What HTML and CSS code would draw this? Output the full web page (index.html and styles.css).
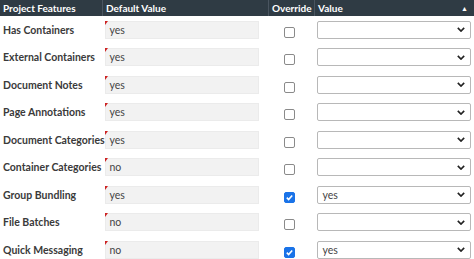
FILE: index.html
```html
<!DOCTYPE html>
<html lang="en">
<head>
    <meta charset="UTF-8">
    <title>Project Features</title>
    <link rel="stylesheet" href="styles.css">
</head>
<body>
    <table class="features">
        <thead>
            <tr>
                <th class="col-name">Project Features</th>
                <th class="col-default">Default Value</th>
                <th class="col-override">Override</th>
                <th class="col-value">Value <span class="sort-arrow">&#9650;</span></th>
            </tr>
        </thead>
        <tbody>
            <tr>
                <td class="name">Has Containers</td>
                <td><div class="default-box">yes</div></td>
                <td class="override"><span class="check"></span></td>
                <td><div class="select"><span></span><svg class="chevron" viewBox="0 0 10 6"><path d="M1 1l4 4 4-4" /></svg></div></td>
            </tr>
            <tr>
                <td class="name">External Containers</td>
                <td><div class="default-box">yes</div></td>
                <td class="override"><span class="check"></span></td>
                <td><div class="select"><span></span><svg class="chevron" viewBox="0 0 10 6"><path d="M1 1l4 4 4-4" /></svg></div></td>
            </tr>
            <tr>
                <td class="name">Document Notes</td>
                <td><div class="default-box">yes</div></td>
                <td class="override"><span class="check"></span></td>
                <td><div class="select"><span></span><svg class="chevron" viewBox="0 0 10 6"><path d="M1 1l4 4 4-4" /></svg></div></td>
            </tr>
            <tr>
                <td class="name">Page Annotations</td>
                <td><div class="default-box">yes</div></td>
                <td class="override"><span class="check"></span></td>
                <td><div class="select"><span></span><svg class="chevron" viewBox="0 0 10 6"><path d="M1 1l4 4 4-4" /></svg></div></td>
            </tr>
            <tr>
                <td class="name">Document Categories</td>
                <td><div class="default-box">yes</div></td>
                <td class="override"><span class="check"></span></td>
                <td><div class="select"><span></span><svg class="chevron" viewBox="0 0 10 6"><path d="M1 1l4 4 4-4" /></svg></div></td>
            </tr>
            <tr>
                <td class="name">Container Categories</td>
                <td><div class="default-box">no</div></td>
                <td class="override"><span class="check"></span></td>
                <td><div class="select"><span></span><svg class="chevron" viewBox="0 0 10 6"><path d="M1 1l4 4 4-4" /></svg></div></td>
            </tr>
            <tr>
                <td class="name">Group Bundling</td>
                <td><div class="default-box">yes</div></td>
                <td class="override"><span class="check checked"><svg viewBox="0 0 10 10"><path d="M2 5.2l2 2 4-4.4" /></svg></span></td>
                <td><div class="select"><span>yes</span><svg class="chevron" viewBox="0 0 10 6"><path d="M1 1l4 4 4-4" /></svg></div></td>
            </tr>
            <tr>
                <td class="name">File Batches</td>
                <td><div class="default-box">no</div></td>
                <td class="override"><span class="check"></span></td>
                <td><div class="select"><span></span><svg class="chevron" viewBox="0 0 10 6"><path d="M1 1l4 4 4-4" /></svg></div></td>
            </tr>
            <tr>
                <td class="name">Quick Messaging</td>
                <td><div class="default-box">no</div></td>
                <td class="override"><span class="check checked"><svg viewBox="0 0 10 10"><path d="M2 5.2l2 2 4-4.4" /></svg></span></td>
                <td><div class="select"><span>yes</span><svg class="chevron" viewBox="0 0 10 6"><path d="M1 1l4 4 4-4" /></svg></div></td>
            </tr>
        </tbody>
    </table>
</body>
</html>
```

FILE: styles.css
```css
body {
    margin: 0;
    background-color: #ffffff;
    font-family: Lato, "Open Sans", sans-serif;
    overflow: hidden;
}

.features {
    width: 474px;
    border-collapse: collapse;
    table-layout: fixed;
}

/* Header row */
.features th {
    height: 16px;
    padding: 0 3px;
    background-color: #2f3b44;
    color: #ffffff;
    font-size: 10px;
    font-weight: bold;
    text-align: left;
    white-space: nowrap;
    border-left: 1px solid #4a5560;
}
.features th:first-child { border-left: none; }
.col-name { width: 96px; }
.col-default { width: 159px; }
.col-override { width: 39px; }
.col-value { position: relative; }
.sort-arrow {
    position: absolute;
    right: 6px;
    top: 4px;
    font-size: 7px;
}

/* Body rows */
.features td {
    height: 27.5px;
    padding: 0;
    vertical-align: middle;
    white-space: nowrap;
}
.name {
    padding-left: 3px !important;
    font-size: 10.5px;
    font-weight: bold;
    color: #3a3a3a;
}

.default-box {
    position: relative;
    width: 154px;
    height: 18px;
    margin-left: 2px;
    background-color: #f2f2f2;
    border: 1px solid #ebebeb;
    box-sizing: border-box;
    font-size: 10.5px;
    color: #444;
    line-height: 16px;
    padding-left: 4px;
}
.default-box::before {
    content: "";
    position: absolute;
    left: -1px;
    top: -1px;
    border-top: 4px solid #cc2222;
    border-right: 3px solid transparent;
}

.features td.override {
    text-align: center;
    padding-right: 5px;
}
.check {
    display: inline-block;
    width: 11px;
    height: 11px;
    border: 1px solid #8a8a8a;
    border-radius: 2px;
    box-sizing: border-box;
    vertical-align: middle;
}
.check.checked {
    background-color: #1a73e8;
    border-color: #1a73e8;
}
.check svg {
    display: block;
    width: 9px;
    height: 9px;
    fill: none;
    stroke: #ffffff;
    stroke-width: 1.8;
}

.select {
    display: flex;
    align-items: center;
    justify-content: space-between;
    width: 154px;
    height: 18px;
    margin-left: 2px;
    border: 1px solid #b8b8b8;
    border-radius: 2px;
    box-sizing: border-box;
    padding: 0 5px;
    font-size: 10.5px;
    color: #444;
}
.chevron {
    width: 8px;
    height: 5px;
    fill: none;
    stroke: #222;
    stroke-width: 2;
}
```
